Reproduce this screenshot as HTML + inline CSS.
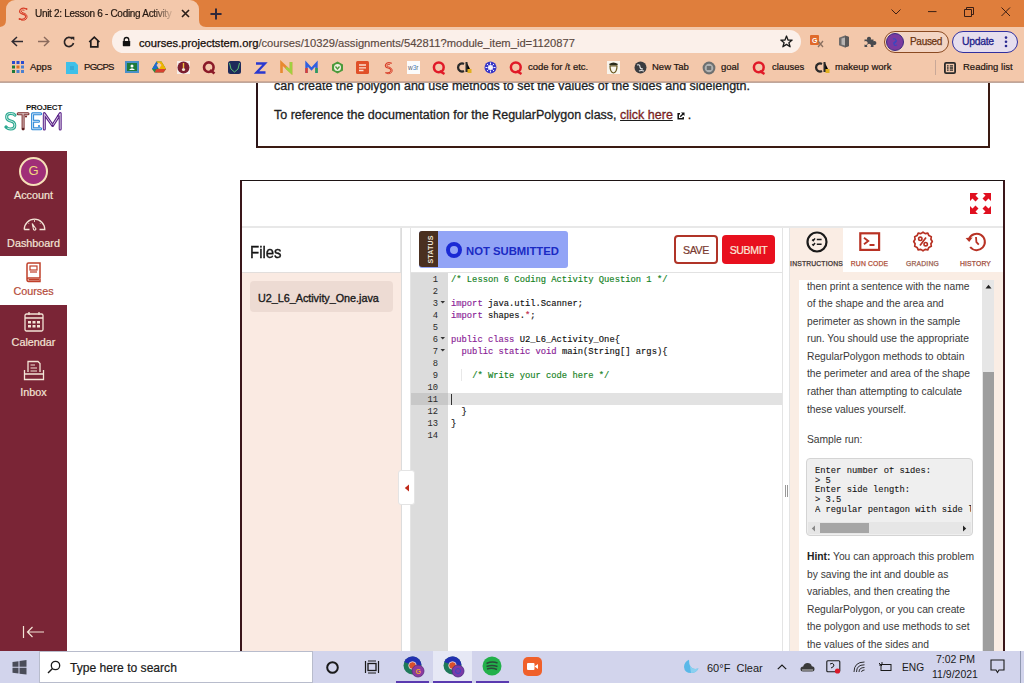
<!DOCTYPE html>
<html><head><meta charset="utf-8">
<style>
*{margin:0;padding:0;box-sizing:border-box}
html,body{width:1024px;height:683px;overflow:hidden;background:#fff;font-family:"Liberation Sans",sans-serif;position:relative}
.a{position:absolute}
svg{position:absolute;overflow:visible}
#tabbar{left:0;top:0;width:1024px;height:27px;background:#DF7E3C}
#tab{left:6px;top:0;width:193px;height:27px;background:#F3C8AB;border-radius:9px 9px 0 0}
#toolbar{left:0;top:27px;width:1024px;height:54px;background:#F3C8AB}
#bmline{left:0;top:81px;width:1024px;height:1px;background:#CFAA96}
#url{left:112px;top:30px;width:689px;height:23px;background:#FBF0EA;border-radius:12px}
.ttl{left:35px;top:7.5px;font-size:10px;letter-spacing:-0.3px;color:#22160F;-webkit-text-stroke:0.2px #22160F;white-space:nowrap;width:140px;overflow:hidden;
 -webkit-mask-image:linear-gradient(90deg,#000 84%,transparent 100%)}
.bm{font-size:9.5px;color:#1E140F;white-space:nowrap;top:61px;-webkit-text-stroke:0.2px #1E140F}
.urlt{left:139px;top:36.5px;font-size:11.2px;color:#5A4840;white-space:nowrap;-webkit-text-stroke:0.15px #5A4840}
.urlt b{font-weight:normal;color:#140C08;-webkit-text-stroke:0.25px #140C08}
.wc{stroke:#3A1E14;stroke-width:1;fill:none}
</style></head><body>
<!-- ============ CHROME TAB BAR ============ -->
<div class="a" id="tabbar"></div>
<div class="a" id="tab"></div>
<svg style="left:-1px;top:20px" width="7" height="7"><path d="M0 7 Q7 7 7 0 L7 7 Z" fill="#F3C8AB"/></svg>
<svg style="left:199px;top:20px" width="7" height="7"><path d="M7 7 Q0 7 0 0 L0 7 Z" fill="#F3C8AB"/></svg>
<svg style="left:17px;top:7px" width="12" height="14" viewBox="0 0 12 14"><path d="M9.5 2 Q5 0 3 3 Q1.5 6 5.5 7 Q9.5 8 8.5 10.5 Q7 13 2.5 12" stroke="#D8402A" stroke-width="1.3" fill="none"/><path d="M7.5 3.2 Q5 2.5 4.3 4 Q4 5.3 6 5.8 Q10.5 7 10 10.5 Q9 14 4 13" stroke="#D8402A" stroke-width="1" fill="none"/><circle cx="9.6" cy="2" r="0.9" fill="#D8402A"/><circle cx="2.5" cy="12" r="0.9" fill="#D8402A"/></svg>
<div class="a ttl">Unit 2: Lesson 6 - Coding Activity</div>
<svg style="left:181px;top:9px" width="9" height="9"><path d="M1 1 L8 8 M8 1 L1 8" stroke="#2A1E18" stroke-width="1.6"/></svg>
<svg style="left:210px;top:8px" width="12" height="12"><path d="M6 1.2 V10.8 M1.2 6 H10.8" stroke="#30283A" stroke-width="2" stroke-linecap="round"/></svg>
<svg style="left:890px;top:8px" width="12" height="8"><path class="wc" d="M1.5 1.5 L6 6 L10.5 1.5"/></svg>
<svg style="left:928px;top:11px" width="10" height="2"><path class="wc" d="M0 0.6 H8.5" stroke-width="1.2"/></svg>
<svg style="left:963px;top:6px" width="12" height="12"><path class="wc" d="M1.5 3.5 H8.5 V10.5 H1.5 Z M3.5 3.5 V1.5 H10.5 V8.5 H8.5" stroke-width="1.4"/></svg>
<svg style="left:1000px;top:6px" width="12" height="12"><path class="wc" d="M1.5 1.5 L10 10 M10 1.5 L1.5 10" stroke-width="1.3"/></svg>

<!-- ============ TOOLBAR ============ -->
<div class="a" id="toolbar"></div>
<svg style="left:11px;top:36px" width="13" height="11"><path d="M12 5.5 H1.5 M6 1 L1.2 5.5 L6 10" stroke="#2E2A30" stroke-width="1.5" fill="none"/></svg>
<svg style="left:37px;top:36px" width="13" height="11"><path d="M1 5.5 H11.5 M7 1 L11.8 5.5 L7 10" stroke="#8A6A5C" stroke-width="1.4" fill="none"/></svg>
<svg style="left:63px;top:36px" width="13" height="12"><path d="M10.5 7 A4.6 4.6 0 1 1 9.3 2.8" stroke="#2A2424" stroke-width="1.7" fill="none"/><path d="M7.5 0.8 H11.3 V4.6 Z" fill="#2A2424"/></svg>
<svg style="left:88px;top:36px" width="13" height="12"><path d="M1.2 6 L6.3 1.2 L11.4 6 M2.8 4.8 V10.8 H9.8 V4.8" stroke="#1E1A1A" stroke-width="1.7" fill="none"/></svg>
<div class="a" id="url"></div>
<svg style="left:122px;top:37px" width="9" height="10"><path d="M2.2 4 V2.8 A2.3 2.3 0 0 1 6.8 2.8 V4" stroke="#111" stroke-width="1.3" fill="none"/><rect x="0.8" y="4" width="7.4" height="5.2" rx="0.6" fill="#111"/></svg>
<div class="a urlt"><b>courses.projectstem.org</b>/courses/10329/assignments/542811?module_item_id=1120877</div>
<svg style="left:780px;top:35px" width="13" height="13"><path d="M6.5 1 L8 5 L12.2 5.1 L8.9 7.7 L10.1 11.8 L6.5 9.4 L2.9 11.8 L4.1 7.7 L0.8 5.1 L5 5 Z" stroke="#1a1a1a" stroke-width="1.3" fill="none" stroke-linejoin="round"/></svg>
<!-- ext icons -->
<svg style="left:810px;top:35px" width="14" height="13"><rect x="0" y="0" width="9" height="10" rx="1" fill="#E06A2A"/><text x="2" y="8" font-size="7" fill="#fff" font-family="Liberation Sans" font-weight="bold">G</text><path d="M8 6 L13 12 M13 6 L8 12" stroke="#8a7060" stroke-width="1.3"/></svg>
<svg style="left:838px;top:35px" width="12" height="13"><path d="M7 0.5 L11 2 V11 L7 12.5 L1 10.2 V2.8 Z" fill="#6E6C6C"/><path d="M7 2.5 V10.5 L3.5 9.5 V3.5 Z" fill="#B8B4B2"/><path d="M7 0.5 L11 2 V11 L7 12.5 Z" fill="#5A5858"/></svg>
<svg style="left:863px;top:35px" width="14" height="13"><path d="M1.5 4.5 H4.2 A2 2 0 1 1 7.8 4.5 H10.5 V6.2 A2 2 0 1 1 10.5 9.8 V12 H7.6 A2 2 0 1 0 4.4 12 H1.5 V9.6 A2 2 0 1 0 1.5 6.4 Z" fill="#484A4E"/></svg>
<div class="a" style="left:884px;top:31px;width:65px;height:22px;border:1.6px solid #8A4A22;border-radius:11px;background:#F3D5C4"></div>
<div class="a" style="left:886px;top:33px;width:18px;height:18px;border-radius:50%;background:#7A3AA0;border:1px solid #3B2A80"></div>
<svg style="left:890px;top:37px" width="10" height="10"><path d="M3 2 Q6 1 6 4 Q6 6 3 6 M7 4 Q4 4 4 7 Q4 9 7 8" stroke="#3848C0" stroke-width="1.1" fill="none"/></svg>
<div class="a" style="left:910px;top:36px;font-size:10px;letter-spacing:-0.3px;color:#6A3410;white-space:nowrap;-webkit-text-stroke:0.25px #6A3410">Paused</div>
<div class="a" style="left:952px;top:31px;width:66px;height:22px;border:1.8px solid #3030A0;border-radius:11px;background:#E6DEEE"></div>
<div class="a" style="left:962px;top:36px;font-size:10.4px;letter-spacing:-0.3px;color:#22208A;white-space:nowrap;-webkit-text-stroke:0.3px #22208A">Update</div>
<svg style="left:1004px;top:36px" width="4" height="12"><circle cx="2" cy="1.6" r="1.3" fill="#2A2890"/><circle cx="2" cy="5.8" r="1.3" fill="#2A2890"/><circle cx="2" cy="10" r="1.3" fill="#2A2890"/></svg>

<!-- ============ BOOKMARKS ============ -->
<div class="a" id="bmline"></div>
<!-- apps grid -->
<svg style="left:12px;top:61px" width="12" height="12"><g>
<rect x="0" y="0" width="3" height="3" fill="#2A4CD0"/><rect x="4.5" y="0" width="3" height="3" fill="#2A4CD0"/><rect x="9" y="0" width="3" height="3" fill="#2A4CD0"/>
<rect x="0" y="4.5" width="3" height="3" fill="#1E7A3A"/><rect x="4.5" y="4.5" width="3" height="3" fill="#E07020"/><rect x="9" y="4.5" width="3" height="3" fill="#4A80D0"/>
<rect x="0" y="9" width="3" height="3" fill="#1E7A3A"/><rect x="4.5" y="9" width="3" height="3" fill="#4A80D0"/><rect x="9" y="9" width="3" height="3" fill="#4A80D0"/></g></svg>
<div class="a bm" style="left:30px">Apps</div>
<svg style="left:66px;top:61px" width="12" height="13"><path d="M0 1 H9 L12 4 V13 H0 Z" fill="#3EC0E8"/><path d="M4 6 H8 M4 8 H8" stroke="#2A90C0" stroke-width="0.8"/></svg>
<div class="a bm" style="left:84px;letter-spacing:-0.7px">PGCPS</div>
<svg style="left:125px;top:61px" width="14" height="12"><rect x="0" y="0" width="14" height="12" fill="#4A90C8"/><rect x="2" y="2" width="10" height="8" fill="#1E7A3A"/><circle cx="7" cy="5" r="1.5" fill="#fff"/><path d="M4 9 Q7 5.5 10 9" fill="#fff"/></svg>
<svg style="left:152px;top:61px" width="14" height="12"><path d="M4.5 0.5 H9.5 L14 8 L11.5 11.5 H2.5 L0 8 Z" fill="#2A8A40"/><path d="M4.5 0.5 H9.5 L14 8 H7 Z" fill="#F0B400"/><path d="M14 8 L11.5 11.5 H2.5 L4.5 8 Z" fill="#D84030"/><path d="M0 8 L4.5 0.5 L7 4.5 L4.5 8 Z" fill="#1E6AD0"/><path d="M4.5 4 L7 1.5 L9.5 4 L7 8 Z" fill="#F3C8AB"/></svg>
<svg style="left:177px;top:61px" width="13" height="13"><rect x="0" y="0" width="13" height="13" fill="#F6EDE8"/><circle cx="6.5" cy="6.5" r="6" fill="#7A1E30"/><path d="M6.5 2 V7" stroke="#F0C040" stroke-width="1.4"/><circle cx="6.5" cy="8.5" r="1.6" fill="#F6E6D0"/></svg>
<svg style="left:202px;top:61px" width="14" height="13"><circle cx="6.8" cy="6.2" r="4.8" stroke="#8A1A28" stroke-width="2.6" fill="none"/><path d="M8 9 L12.5 12.5" stroke="#8A1A28" stroke-width="2.6"/></svg>
<svg style="left:228px;top:61px" width="13" height="13"><rect x="0" y="0" width="13" height="13" rx="2.5" fill="#1E2A5A"/><path d="M1.5 2 L3 8 L6.5 11 L10 8 L11.5 2" stroke="#5AC070" stroke-width="1" fill="none"/></svg>
<svg style="left:255px;top:62px" width="11" height="12"><path d="M1 1.5 H10 L1.5 10.5 H10.5" stroke="#2A38D0" stroke-width="2.3" fill="none"/></svg>
<svg style="left:280px;top:61px" width="13" height="13"><path d="M1.5 12 V2 L11 11 V1" stroke="#E88A30" stroke-width="2.6" fill="none"/><path d="M6 6.5 L11 11 V1" stroke="#A0D040" stroke-width="2.6" fill="none"/></svg>
<svg style="left:305px;top:62px" width="13" height="12"><path d="M1.5 11 V1.5 L6.5 7 L11.5 1.5 V11" stroke="#3060E0" stroke-width="2.4" fill="none"/><path d="M1.5 11 V6" stroke="#E04030" stroke-width="2.4"/><path d="M11.5 11 V6" stroke="#30A050" stroke-width="2.4"/></svg>
<svg style="left:331px;top:61px" width="13" height="13"><path d="M6.5 0.5 L12 3.5 V9.5 L6.5 12.5 L1 9.5 V3.5 Z" fill="#4A9A3A"/><circle cx="6.5" cy="6.5" r="3.5" fill="#F0F0E0"/><path d="M4.5 5.5 L6.5 8 L8.5 5.5" stroke="#4A9A3A" stroke-width="1.3" fill="none"/></svg>
<svg style="left:356px;top:61px" width="13" height="13"><rect x="0" y="0" width="13" height="13" rx="1.5" fill="#E05028"/><path d="M3 4 H10 M3 6.8 H10 M3 9.5 H7.5" stroke="#FBE0D0" stroke-width="1.3"/></svg>
<svg style="left:383px;top:61px" width="11" height="14" viewBox="0 0 12 14"><path d="M9.5 2 Q5 0 3 3 Q1.5 6 5.5 7 Q9.5 8 8.5 10.5 Q7 13 2.5 12" stroke="#D8402A" stroke-width="1.3" fill="none"/><path d="M7.5 3.2 Q5 2.5 4.3 4 Q4 5.3 6 5.8 Q10.5 7 10 10.5 Q9 14 4 13" stroke="#D8402A" stroke-width="1" fill="none"/></svg>
<svg style="left:407px;top:61px" width="13" height="13"><rect x="0" y="0" width="13" height="13" fill="#FBFBFB"/><text x="1" y="9" font-size="6.5" fill="#5A6070" font-family="Liberation Sans">w<tspan fill="#3A8AD0">3</tspan>r</text></svg>
<svg style="left:432px;top:61px" width="14" height="14"><circle cx="6.8" cy="6.3" r="4.9" stroke="#E01A28" stroke-width="2.5" fill="none"/><path d="M7.5 10 L12.5 13" stroke="#E01A28" stroke-width="2.5"/></svg>
<svg style="left:457px;top:61px" width="15" height="13"><path d="M7 3 A4 4 0 1 0 7 10" stroke="#2A2A2A" stroke-width="2.3" fill="none"/><path d="M9.5 1 V10 H14" stroke="#2A2A2A" stroke-width="2"/><rect x="10.5" y="8" width="4" height="4" fill="#E0B020"/></svg>
<svg style="left:484px;top:61px" width="13" height="13"><circle cx="6.5" cy="6.5" r="6" fill="#3A38C8"/><circle cx="6.5" cy="6.5" r="2.5" fill="#F3F0FA"/><g stroke="#F3F0FA" stroke-width="1"><path d="M6.5 1.5 V3.5 M6.5 9.5 V11.5 M1.5 6.5 H3.5 M9.5 6.5 H11.5 M3 3 L4.4 4.4 M8.6 8.6 L10 10 M10 3 L8.6 4.4 M4.4 8.6 L3 10"/></g></svg>
<svg style="left:509px;top:61px" width="14" height="14"><circle cx="6.8" cy="6.3" r="4.9" stroke="#E01A28" stroke-width="2.5" fill="none"/><path d="M7.5 10 L12.5 13" stroke="#E01A28" stroke-width="2.5"/></svg>
<div class="a bm" style="left:528px">code for /t etc.</div>
<svg style="left:607px;top:61px" width="13" height="13"><rect x="0" y="0" width="13" height="13" fill="#F8F4EC"/><path d="M2 3 Q6.5 0 11 3 L10 4.5 H3 Z" fill="#2A2A1A"/><path d="M3 5 Q3 11 6.5 12 Q10 11 10 5 Z" stroke="#6A5A20" stroke-width="1.2" fill="none"/></svg>
<svg style="left:634px;top:61px" width="13" height="13"><circle cx="6.5" cy="6.5" r="6" fill="#3A3C40"/><path d="M3 4 Q6 3 6 6 Q6 8 9 8 M5 10 Q7 9 10 10" stroke="#E6E6E6" stroke-width="1.1" fill="none"/></svg>
<div class="a bm" style="left:652px">New Tab</div>
<svg style="left:702px;top:61px" width="14" height="14"><circle cx="7" cy="7" r="6.4" fill="#6E7070"/><circle cx="7" cy="7" r="4.3" fill="#B0B2B2"/><rect x="4.8" y="5" width="4.4" height="4" fill="#6E7070"/></svg>
<div class="a bm" style="left:721px">goal</div>
<svg style="left:752px;top:61px" width="14" height="14"><circle cx="6.8" cy="6.3" r="4.9" stroke="#E01A28" stroke-width="2.5" fill="none"/><path d="M7.5 10 L12.5 13" stroke="#E01A28" stroke-width="2.5"/></svg>
<div class="a bm" style="left:772px">clauses</div>
<svg style="left:815px;top:61px" width="15" height="13"><path d="M7 3 A4 4 0 1 0 7 10" stroke="#2A2A2A" stroke-width="2.3" fill="none"/><path d="M9.5 1 V10 H14" stroke="#2A2A2A" stroke-width="2"/><rect x="10.5" y="8" width="4" height="4" fill="#E0B020"/></svg>
<div class="a bm" style="left:835px">makeup work</div>
<div class="a" style="left:935px;top:60px;width:1px;height:15px;background:#C8A898"></div>
<svg style="left:944px;top:62px" width="12" height="12"><rect x="0.9" y="0.9" width="10.2" height="10.2" rx="1.2" stroke="#2A2A2A" stroke-width="1.8" fill="none"/><path d="M3 3.8 H4.6 M5.8 3.8 H9 M3 6 H4.6 M5.8 6 H9 M3 8.2 H4.6 M5.8 8.2 H9" stroke="#2A2A2A" stroke-width="1.3"/></svg>
<div class="a bm" style="left:963px">Reading list</div>


<div class="a" style="left:0;top:82px;width:1024px;height:569px;overflow:hidden"><div class="a" style="left:0;top:-82px;width:1024px;height:683px">
<!-- ============ PAGE ============ -->
<style>
.lato{font-family:"Liberation Sans",sans-serif}
.side-t{font-size:10.8px;color:#F3E4D6;white-space:nowrap;text-align:center;width:67px;left:0;-webkit-text-stroke:0.2px currentColor}
.code{font-family:"Liberation Mono",monospace;font-size:8.8px;line-height:12px;white-space:pre;color:#111;-webkit-text-stroke:0.15px currentColor}
.ln{font-family:"Liberation Mono",monospace;font-size:8.8px;line-height:12px;color:#2A2A2A;text-align:right;width:27px;left:411px}
.cm{color:#15821E}.kw{color:#8A1E96}
.ins{font-size:10.3px;letter-spacing:-0.02px;line-height:17.6px;color:#3A3A3A;white-space:nowrap;left:807px}
.tabl{font-size:6.8px;white-space:nowrap;text-align:center;letter-spacing:0.15px;-webkit-text-stroke:0.25px currentColor}
</style>
<!-- top instruction box -->
<div class="a" style="left:256px;top:60px;width:734px;height:88px;border:2px solid #3A1A12;border-top:none;border-left-color:#2A1418"></div>
<div class="a lato" style="left:274px;top:78.5px;font-size:12.5px;color:#1E1E1E;white-space:nowrap;-webkit-text-stroke:0.3px #1E1E1E">can create the polygon and use methods to set the values of the sides and sidelength.</div>
<div class="a lato" style="left:274px;top:107.5px;font-size:12.5px;color:#1E1E1E;white-space:nowrap;-webkit-text-stroke:0.3px #1E1E1E">To reference the documentation for the RegularPolygon class, <span style="color:#B8201A;text-decoration:underline">click here</span><span style="display:inline-block;width:15px"></span>.</div>
<svg style="left:677px;top:111.5px" width="8" height="8"><path d="M3 1.8 H1.2 V6.8 H6.2 V5" stroke="#111" stroke-width="1.5" fill="none"/><path d="M3.2 4.8 L6.5 1.5" stroke="#111" stroke-width="1.3"/><path d="M4 0.5 H7.5 V4 Z" fill="#111"/></svg>

<!-- sidebar -->
<div class="a" style="left:0;top:82px;width:67px;height:569px;background:#7A2536"></div>
<div class="a" style="left:0;top:82px;width:67px;height:69px;background:#fff"></div>
<div class="a" style="left:0;top:256px;width:67px;height:49px;background:#fff"></div>
<div class="a" style="left:26px;top:102.5px;font-size:8px;font-weight:bold;color:#1A1A1A;letter-spacing:-0.25px">PROJECT</div>
<svg style="left:4px;top:112px" width="58" height="20" viewBox="0 0 58 20">
 <g fill="none" stroke-width="3" stroke-linecap="round" stroke-linejoin="round">
 <path d="M11 3.2 Q9.8 1.4 6.6 1.4 Q2.6 1.4 2.6 5 Q2.6 8.2 6.6 9 Q10.8 9.8 10.8 13.4 Q10.8 17 6.6 17 Q3.4 17 2 14.8" stroke="#2AA890"/>
 <path d="M14.2 1.8 H24 M19.1 1.8 V16.8" stroke="#7A2A2A"/>
 <path d="M36.6 1.8 H28.6 V16.8 H36.6 M28.6 9.3 H34.5" stroke="#2A88D8"/>
 <path d="M40.3 17 V1.6 L48.6 13.5 L56.2 1.6 V17" stroke="#5A2288"/>
 </g>
 <g fill="none" stroke="#fff" stroke-width="0.75" stroke-linecap="round" stroke-linejoin="round">
 <path d="M11 3.2 Q9.8 1.4 6.6 1.4 Q2.6 1.4 2.6 5 Q2.6 8.2 6.6 9 Q10.8 9.8 10.8 13.4 Q10.8 17 6.6 17 Q3.4 17 2 14.8"/>
 <path d="M14.2 1.8 H24 M19.1 1.8 V16.8"/>
 <path d="M36.6 1.8 H28.6 V16.8 H36.6 M28.6 9.3 H34.5"/>
 <path d="M40.3 17 V1.6 L48.6 13.5 L56.2 1.6 V17"/>
 </g>
 <circle cx="2" cy="15.2" r="1.3" fill="#2AA890"/><circle cx="19.1" cy="17" r="1.3" fill="#5A2020"/><circle cx="22" cy="4.5" r="1.1" fill="#7A2A2A"/><circle cx="35" cy="14" r="1.1" fill="#2A88D8"/><circle cx="48.6" cy="13.5" r="1.1" fill="#5A2288"/><circle cx="54" cy="4" r="1" fill="#5A2288"/>
</svg>
<!-- account -->
<div class="a" style="left:19px;top:156.5px;width:29px;height:29px;border-radius:50%;background:#A02E78;border:2px solid #F6E0B8"></div>
<div class="a" style="left:19px;top:162.5px;width:29px;text-align:center;font-size:13px;color:#F2D880">G</div>
<div class="a side-t" style="top:189px">Account</div>
<svg style="left:23px;top:216px" width="23" height="16"><path d="M1.2 13.5 A10.3 10.3 0 0 1 21.8 13.5 H16.5 M6.5 13.5 H1.2" stroke="#F3E4D6" stroke-width="1.3" fill="none"/><path d="M9.2 7.5 L13 13 Q12 15 10.6 13.6 Z" stroke="#F3E4D6" stroke-width="1.1" fill="none"/><path d="M11.5 4.2 V5.8 M4.8 6.6 L5.8 7.6 M18.2 6.6 L17.2 7.6" stroke="#F3E4D6" stroke-width="1"/></svg>
<div class="a side-t" style="top:237px">Dashboard</div>
<!-- courses -->
<svg style="left:25px;top:262px" width="18" height="21"><path d="M2 2.5 Q2 1 3.5 1 H15 V16 H3.5 Q2 16 2 17.5 V2.5 Z M2 17.5 Q2 19.5 3.5 19.5 H15 V17" stroke="#C0402A" stroke-width="1.5" fill="none"/><rect x="5" y="4" width="7" height="4" stroke="#C0402A" stroke-width="1.2" fill="none"/><path d="M5 10 H12" stroke="#C0402A" stroke-width="1.2"/><path d="M3.5 17.8 H14" stroke="#C0402A" stroke-width="1.6"/></svg>
<div class="a side-t" style="top:285px;color:#B44A38">Courses</div>
<!-- calendar -->
<svg style="left:24px;top:311px" width="20" height="21"><rect x="1" y="3" width="18" height="17" rx="1.5" stroke="#F3E4D6" stroke-width="1.3" fill="none"/><path d="M1 7 H19 M5 1 V4 M15 1 V4" stroke="#F3E4D6" stroke-width="1.3"/><g fill="#F3E4D6"><rect x="4" y="10" width="3" height="2.5"/><rect x="8.5" y="10" width="3" height="2.5"/><rect x="13" y="10" width="3" height="2.5"/><rect x="4" y="14" width="3" height="2.5"/><rect x="8.5" y="14" width="3" height="2.5"/><rect x="13" y="14" width="3" height="2.5"/></g></svg>
<div class="a side-t" style="top:336px">Calendar</div>
<svg style="left:23px;top:360px" width="22" height="21"><path d="M5 12 V1.5 H15 L17 3.5 V12" stroke="#F3E4D6" stroke-width="1.3" fill="none"/><path d="M7.5 5 H12 M7.5 8 H14 M7.5 11 H14" stroke="#F3E4D6" stroke-width="1.2"/><path d="M1.5 10 V19.5 H20.5 V10 M1.5 14 H20.5" stroke="#F3E4D6" stroke-width="1.3" fill="none"/></svg>
<div class="a side-t" style="top:386px">Inbox</div>
<svg style="left:22px;top:625px" width="23" height="14"><path d="M1.5 1 V13 M22 7 H5.5 M10.5 2 L5.5 7 L10.5 12" stroke="#F3E4D6" stroke-width="1.2" fill="none"/></svg>

<!-- lower panel -->
<div class="a" style="left:240px;top:180.4px;width:765px;height:480px;border:2px solid #3A161A;border-top:1.6px solid #1E1414;border-bottom:none;background:#fff"></div>
<svg style="left:969px;top:192px" width="23" height="23"><g fill="#E01020"><path d="M1 1 H9 L6.5 3.5 L9.5 6.5 L6.5 9.5 L3.5 6.5 L1 9 Z"/><path d="M22 1 H14 L16.5 3.5 L13.5 6.5 L16.5 9.5 L19.5 6.5 L22 9 Z"/><path d="M1 22 H9 L6.5 19.5 L9.5 16.5 L6.5 13.5 L3.5 16.5 L1 14 Z"/><path d="M22 22 H14 L16.5 19.5 L13.5 16.5 L16.5 13.5 L19.5 16.5 L22 14 Z"/></g></svg>
<div class="a" style="left:242px;top:226px;width:761px;height:2px;background:#E8E8E8"></div>
<!-- files -->
<div class="a" style="left:242px;top:228px;width:159px;height:423px;background:#fff;border-right:1px solid #E4E4E4"></div>
<div class="a lato" style="left:250px;top:243px;font-size:17px;color:#141414;transform:scaleX(0.88);transform-origin:0 0;-webkit-text-stroke:0.4px #141414">Files</div>
<div class="a" style="left:242px;top:272px;width:159px;height:1px;background:#E2DEDC"></div>
<div class="a" style="left:242px;top:273px;width:159px;height:378px;background:#FAEAE2"></div>
<div class="a" style="left:250px;top:281px;width:143px;height:31px;background:#EDDBD3;border-radius:4px"></div>
<div class="a lato" style="left:258px;top:292px;font-size:10.8px;color:#1A1A1A;white-space:nowrap;letter-spacing:-0.02px;-webkit-text-stroke:0.35px #1A1A1A">U2_L6_Activity_One.java</div>
<div class="a" style="left:401px;top:228px;width:1px;height:423px;background:#DCDCDC"></div>
<div class="a" style="left:410px;top:228px;width:1px;height:423px;background:#E4E4E4"></div>
<!-- editor -->
<div class="a" style="left:419px;top:231px;width:149px;height:37px;background:#92A4F6;border-radius:3px"></div>
<div class="a" style="left:419px;top:231px;width:19px;height:36px;background:#4A3020;border-radius:3px 0 0 3px"></div>
<div class="a" style="left:411px;top:244.5px;width:38px;text-align:center;font-size:7px;line-height:9px;font-weight:bold;color:#F0E6D8;transform:rotate(-90deg);letter-spacing:0.2px">STATUS</div>
<div class="a" style="left:446px;top:242px;width:16px;height:16px;border-radius:50%;border:4.2px solid #1A2AD4"></div>
<div class="a" style="left:466px;top:245px;font-size:11.3px;font-weight:bold;color:#1A2AC4;white-space:nowrap">NOT SUBMITTED</div>
<div class="a" style="left:674px;top:235px;width:44px;height:29px;border:2px solid #B03428;border-radius:4px;background:#fff"></div>
<div class="a" style="left:674px;top:244px;width:44px;text-align:center;font-size:10.6px;letter-spacing:-0.4px;color:#7A3A30;-webkit-text-stroke:0.2px #7A3A30">SAVE</div>
<div class="a" style="left:722px;top:235px;width:53px;height:29px;background:#E8101E;border-radius:4px"></div>
<div class="a" style="left:722px;top:244px;width:53px;text-align:center;font-size:10.6px;letter-spacing:-0.4px;color:#FBE8DA;-webkit-text-stroke:0.2px #FBE8DA">SUBMIT</div>
<div class="a" style="left:411px;top:272px;width:372px;height:1px;background:#E2E2E2"></div>
<div class="a" style="left:411px;top:273px;width:37px;height:378px;background:#DCDCDC"></div>
<div class="a" style="left:448px;top:393px;width:335px;height:12px;background:#E2E2E2"></div>
<div class="a" style="left:411px;top:393px;width:37px;height:12px;background:#C8C8C8"></div>
<div class="a" style="left:782px;top:228px;width:1px;height:423px;background:#E4E4E4"></div>
<div class="a ln" style="top:274px">1<br>2<br>3<br>4<br>5<br>6<br>7<br>8<br>9<br>10<br>11<br>12<br>13<br>14</div>
<svg style="left:440px;top:297px" width="6" height="60"><g fill="#333"><path d="M0.5 4 H5 L2.75 6.5 Z"/><path d="M0.5 40 H5 L2.75 42.5 Z"/><path d="M0.5 52 H5 L2.75 54.5 Z"/></g></svg>
<div class="a code" style="left:451px;top:274px"><span class="cm">/* Lesson 6 Coding Activity Question 1 */</span>

<span class="kw">import</span> java.util.Scanner;
<span class="kw">import</span> shapes.<span style="color:#C02A4A">*</span>;

<span class="kw">public</span> <span class="kw">class</span> U2_L6_Activity_One{
  <span class="kw">public</span> <span class="kw">static</span> <span class="kw">void</span> main(String[] args){

    <span class="cm">/* Write your code here */</span>


  }
}
</div>
<div class="a" style="left:461px;top:369px;width:1px;height:12px;background:#E8E8E8"></div>
<div class="a" style="left:451px;top:394px;width:1px;height:11px;background:#333"></div>
<!-- collapse toggle -->
<div class="a" style="left:398px;top:470px;width:17px;height:35px;background:#fff;border:1px solid #E4E4E4;border-radius:3px"></div>
<svg style="left:404px;top:484px" width="6" height="8"><path d="M5 0.5 V7.5 L0.8 4 Z" fill="#C02A1A"/></svg>
<!-- splitter -->
<div class="a" style="left:783px;top:228px;width:6px;height:423px;background:#fff"></div>
<div class="a" style="left:785px;top:485px;width:1px;height:12px;background:#999"></div>
<div class="a" style="left:787px;top:485px;width:1px;height:12px;background:#999"></div>
<div class="a" style="left:789px;top:228px;width:1px;height:423px;background:#E4E4E4"></div>

<!-- instructions panel -->
<div class="a" style="left:790px;top:228px;width:213px;height:423px;background:#FAEDE4"></div>
<div class="a" style="left:843px;top:228px;width:160px;height:44px;background:#fff"></div>
<svg style="left:806px;top:231px" width="22" height="22"><circle cx="11" cy="11" r="9.5" stroke="#1A1A1A" stroke-width="2.2" fill="none"/><path d="M6.2 8.6 L7.3 9.6 L9 7.4 M10.8 8.6 H15.6 M6.2 13.2 L7.3 14.2 L9 12 M10.8 13.2 H15.6" stroke="#1A1A1A" stroke-width="1.5" fill="none"/></svg>
<div class="a tabl" style="left:790px;top:260px;width:53px;color:#3A3030">INSTRUCTIONS</div>
<svg style="left:859px;top:232px" width="22" height="20"><rect x="1.3" y="1.3" width="18.8" height="16.6" stroke="#B83224" stroke-width="2.2" fill="none"/><path d="M5 5.8 L9.2 9 L5 12.2 M10.5 13 H15.5" stroke="#B83224" stroke-width="1.9" fill="none"/></svg>
<div class="a tabl" style="left:843px;top:260px;width:53px;color:#B0503A">RUN CODE</div>
<svg style="left:912px;top:231px" width="22" height="22"><path d="M11 1.2 L13.2 2.6 L15.8 2.2 L16.9 4.6 L19.3 5.7 L18.9 8.3 L20.3 10.5 L18.9 12.7 L19.3 15.3 L16.9 16.4 L15.8 18.8 L13.2 18.4 L11 19.8 L8.8 18.4 L6.2 18.8 L5.1 16.4 L2.7 15.3 L3.1 12.7 L1.7 10.5 L3.1 8.3 L2.7 5.7 L5.1 4.6 L6.2 2.2 L8.8 2.6 Z" stroke="#B83224" stroke-width="1.7" fill="none" stroke-linejoin="round"/><circle cx="8.3" cy="7.8" r="1.7" stroke="#B83224" stroke-width="1.6" fill="none"/><circle cx="13.7" cy="13.2" r="1.7" stroke="#B83224" stroke-width="1.6" fill="none"/><path d="M14 6.5 L8 14.5" stroke="#B83224" stroke-width="1.7"/></svg>
<div class="a tabl" style="left:896px;top:260px;width:53px;color:#9A6050">GRADING</div>
<svg style="left:965px;top:231px" width="22" height="22"><path d="M4 8 A8.2 8.2 0 1 1 5.2 16" stroke="#B83224" stroke-width="2" fill="none"/><path d="M0.6 7 L4.2 11 L7.6 6.6 Z" fill="#B83224"/><path d="M11 6 L11.4 11 L13.8 13.6" stroke="#B83224" stroke-width="1.8" fill="none"/></svg>
<div class="a tabl" style="left:949px;top:260px;width:53px;color:#A04A3A">HISTORY</div>
<div class="a" style="left:799px;top:280px;width:183px;height:371px;background:#fff"></div>
<div class="a" style="left:982px;top:280px;width:12px;height:371px;background:#E6E6E6"></div>
<div class="a" style="left:983px;top:372px;width:11px;height:279px;background:#9E9E9E"></div>
<svg style="left:985px;top:284px" width="7" height="5"><path d="M0.5 4.5 H6.5 L3.5 0.8 Z" fill="#222"/></svg>
<div class="a ins" style="top:277.5px">then print a sentence with the name<br>of the shape and the area and<br>perimeter as shown in the sample<br>run. You should use the appropriate<br>RegularPolygon methods to obtain<br>the perimeter and area of the shape<br>rather than attempting to calculate<br>these values yourself.</div>
<div class="a ins" style="top:430.5px">Sample run:</div>
<div class="a" style="left:806px;top:458px;width:167px;height:78px;background:#EFEFEF;border:1px solid #D4D4D4;border-radius:4px"></div>
<div class="a" style="left:815px;top:467px;width:156px;overflow:hidden;font-family:'Liberation Mono',monospace;font-size:8.8px;line-height:9.7px;color:#151515;white-space:pre;-webkit-text-stroke:0.1px currentColor">Enter number of sides:
&gt; 5
Enter side length:
&gt; 3.5
A regular pentagon with side length 3.5</div>
<div class="a" style="left:808px;top:522px;width:163px;height:12px;background:#E6E6E6"></div>
<div class="a" style="left:820px;top:523px;width:49px;height:10px;background:#A6A6A6"></div>
<svg style="left:811px;top:525px" width="5" height="7"><path d="M4 0.5 V6.5 L0.8 3.5 Z" fill="#888"/></svg>
<svg style="left:962px;top:525px" width="5" height="7"><path d="M1 0.5 V6.5 L4.2 3.5 Z" fill="#222"/></svg>
<div class="a ins" style="top:548px"><b style="color:#222">Hint:</b> You can approach this problem<br>by saving the int and double as<br>variables, and then creating the<br>RegularPolygon, or you can create<br>the polygon and use methods to set<br>the values of the sides and</div>
<div class="a" style="left:994px;top:272px;width:9px;height:379px;background:#FAEDE4"></div>

</div></div>
<!-- ============ TASKBAR ============ -->
<div class="a" style="left:0;top:651px;width:1024px;height:32px;background:#D2D4EC"></div>
<svg style="left:12px;top:660px" width="15" height="15"><g fill="#4A4C58"><path d="M0.5 2 L6.5 1.2 V6.8 H0.5 Z"/><path d="M7.5 1 L14.5 0 V6.8 H7.5 Z"/><path d="M0.5 7.8 H6.5 V13.6 L0.5 12.8 Z"/><path d="M7.5 7.8 H14.5 V14.6 L7.5 13.8 Z"/></g></svg>
<div class="a" style="left:39px;top:651px;width:274px;height:32px;background:#fff;border:1px solid #B8BCCC"></div>
<svg style="left:47px;top:660px" width="14" height="14"><circle cx="8.5" cy="5.5" r="4.2" stroke="#1A1A1A" stroke-width="1.3" fill="none"/><path d="M5.5 8.5 L1 13" stroke="#1A1A1A" stroke-width="1.4"/></svg>
<div class="a" style="left:70px;top:661px;font-size:12.1px;color:#1A1A1A;white-space:nowrap;-webkit-text-stroke:0.2px #1A1A1A">Type here to search</div>
<svg style="left:326px;top:661px" width="13" height="13"><circle cx="6.5" cy="6.5" r="5.3" stroke="#1A1A1A" stroke-width="2" fill="none"/></svg>
<svg style="left:365px;top:660px" width="14" height="14"><rect x="3" y="3.5" width="8" height="7" stroke="#1A1A1A" stroke-width="1.3" fill="none"/><path d="M0.5 1 V13 M13.5 1 V13 M3 1 H11 M3 13 H11" stroke="#1A1A1A" stroke-width="1.2"/></svg>
<div class="a" style="left:433px;top:651px;width:39px;height:32px;background:#E6E8F5"></div>
<div class="a" style="left:396px;top:681px;width:33px;height:2px;background:#5A3AB0"></div>
<div class="a" style="left:433px;top:681px;width:39px;height:2px;background:#5A3AB0"></div>
<div class="a" style="left:476px;top:681px;width:33px;height:2px;background:#5A3AB0"></div>
<svg style="left:403px;top:656px" width="22" height="22"><circle cx="9.5" cy="9.5" r="9" fill="#1E7A5A"/><path d="M1.2 6 A9 9 0 0 1 18.5 9 L9.5 9 Z" fill="#2230B0"/><circle cx="9.5" cy="9.5" r="3.8" fill="#D8502A" stroke="#E8E0F0" stroke-width="0.8"/><circle cx="15" cy="15" r="6" fill="#8A3AA0" stroke="#5A2A80" stroke-width="0.8"/><text x="12.6" y="17.6" font-size="7" fill="#F0A030" font-family="Liberation Sans" font-weight="bold">G</text></svg>
<svg style="left:443px;top:656px" width="22" height="22"><circle cx="9.5" cy="9.5" r="9" fill="#1E7A5A"/><path d="M1.2 6 A9 9 0 0 1 18.5 9 L9.5 9 Z" fill="#2230B0"/><circle cx="9.5" cy="9.5" r="3.8" fill="#D8502A" stroke="#E8E0F0" stroke-width="0.8"/><circle cx="15" cy="15" r="6" fill="#7A3AA8" stroke="#4A2A80" stroke-width="0.8"/><circle cx="15" cy="15" r="2.5" stroke="#3A48C0" stroke-width="1" fill="none"/></svg>
<svg style="left:482px;top:656px" width="20" height="20"><circle cx="10" cy="10" r="9.5" fill="#22B04A"/><path d="M4.5 7.5 Q10 5 15.5 7 M4.5 10.5 Q10 8.5 15.5 10.5 M5 13 Q10 11.5 15 13.5" stroke="#2A4A3A" stroke-width="1.5" fill="none"/></svg>
<svg style="left:523px;top:657px" width="19" height="19"><rect x="0" y="0" width="19" height="19" rx="5" fill="#F0602A"/><rect x="4" y="6" width="7.5" height="7" rx="1" fill="#fff"/><path d="M11.5 9.5 L15 7 V12 Z" fill="#fff"/></svg>
<svg style="left:683px;top:659px" width="16" height="15"><path d="M6 0.8 Q1 3 1 8 Q1.5 14 8 14 Q13 14 15.5 9.5 Q9 11 7 6.5 Q5.5 3.5 6 0.8 Z" fill="#5AB8E8"/><path d="M6 0.8 Q5.5 3.5 7 6.5 Q9 11 15.5 9.5 Q13 14 8 14 Z" fill="#8AD0F0"/></svg>
<div class="a" style="left:707px;top:662px;font-size:11px;color:#1A1A1A;white-space:nowrap">60°F &nbsp;Clear</div>
<svg style="left:777px;top:664px" width="10" height="6"><path d="M0.8 5.2 L5 1 L9.2 5.2" stroke="#1A1A1A" stroke-width="1.2" fill="none"/></svg>
<svg style="left:800px;top:662px" width="15" height="10"><path d="M3 9.5 Q0.5 9.5 0.5 7 Q0.5 4.5 3.2 4.5 Q4 1 7.5 1 Q11 1 11.8 4.3 Q14.5 4.5 14.5 7 Q14.5 9.5 12 9.5 Z" fill="#3A3A3A"/><path d="M2 8 H13" stroke="#C8C8C8" stroke-width="1"/></svg>
<svg style="left:826px;top:660px" width="15" height="14"><rect x="0.8" y="0.8" width="13" height="11" rx="1" stroke="#1A1A1A" stroke-width="1.1" fill="none"/><path d="M4 4 Q7 2 8 5 Q8 7 5 8" stroke="#1A1A1A" stroke-width="1" fill="none"/><circle cx="11.5" cy="11" r="2.6" fill="#D81A2A"/></svg>
<svg style="left:853px;top:661px" width="13" height="12"><path d="M1 11 Q1 1 11.5 1 M3.5 11 Q3.5 3.8 11.5 3.8 M6 11 Q6 6.5 11.5 6.5 M8.5 11 Q8.5 9 11.5 9" stroke="#1A1A1A" stroke-width="0.9" fill="none"/></svg>
<svg style="left:878px;top:661px" width="14" height="11"><rect x="3" y="3.5" width="10" height="6" stroke="#1A1A1A" stroke-width="1" fill="none"/><path d="M1 2 L4 5 M4 1 V4 M1 4 H4" stroke="#1A1A1A" stroke-width="1"/></svg>
<div class="a" style="left:902px;top:662px;font-size:10.2px;color:#1A1A1A">ENG</div>
<div class="a" style="left:934px;top:653px;font-size:10.5px;color:#1A1A1A;white-space:nowrap;text-align:center;width:43px">7:02 PM</div>
<div class="a" style="left:930px;top:668px;font-size:10.5px;color:#1A1A1A;white-space:nowrap;text-align:center;width:50px">11/9/2021</div>
<svg style="left:990px;top:659px" width="15" height="15"><path d="M1 1 H14 V11 H9 L7.5 13.5 L6 11 H1 Z" stroke="#1A1A1A" stroke-width="1.1" fill="none"/></svg>
<div class="a" style="left:1020px;top:651px;width:1px;height:32px;background:#9098B0"></div>
<div class="a" style="left:0;top:82px;width:1024px;height:1px;background:#BFA79C"></div>
</body></html>
